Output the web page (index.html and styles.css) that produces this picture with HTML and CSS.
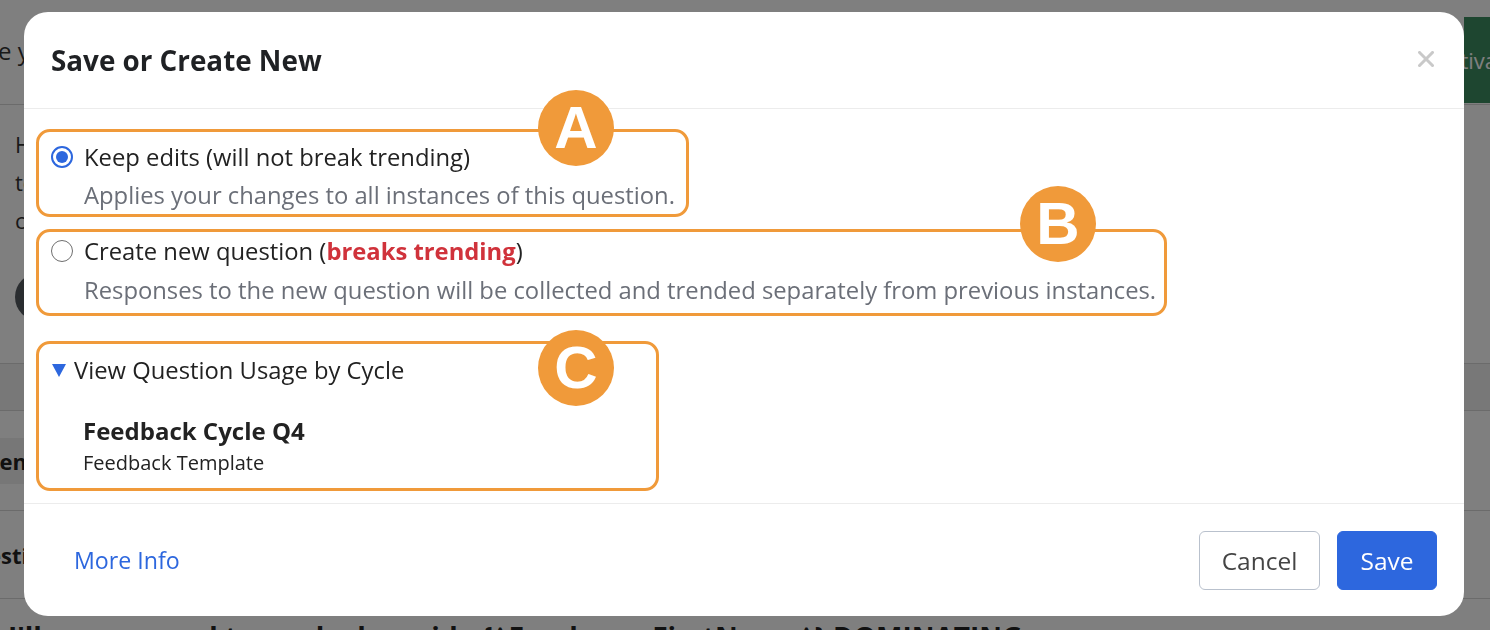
FILE: index.html
```html
<!DOCTYPE html>
<html lang="en">

<head>
    <meta charset="UTF-8">
    <meta name="viewport" content="width=device-width, initial-scale=1.0">
    <title>Save or Create New</title>
    <link rel="stylesheet" href="styles.css">
</head>

<body>
    <!-- page behind the dialog -->
    <div class="page">
        <div class="topbar">
            <span class="crumb">e your survey questions</span>
            <span class="activate">Activate</span>
        </div>
        <div class="intro">
            <p>Here you can review the questions</p>
            <p>to make sure they are right</p>
            <p>collecting feedback.</p>
            <div class="avatar"></div>
        </div>
        <div class="band"></div>
        <div class="row row-light"><span class="strong">Engagement</span></div>
        <div class="row row-short"><span class="strong">Questions</span></div>
        <div class="row-last">I'll recommend to work alongside {^Employee.FirstName^} DOMINATING</div>
    </div>

    <div class="overlay"></div>

    <div class="modal">
        <div class="modal-header">
            <h2>Save or Create New</h2>
            <button class="close" aria-label="Close">
                <svg width="16" height="16" viewBox="0 0 16 16">
                    <path d="M1.5 1.5 L14.5 14.5 M14.5 1.5 L1.5 14.5" stroke="#c9c9c9" stroke-width="3" stroke-linecap="square"/>
                </svg>
            </button>
        </div>

        <div class="modal-body">
            <div class="note note-a">
                <label class="option"><span class="radio checked"></span>Keep edits (will not break trending)</label>
                <p class="hint">Applies your changes to all instances of this question.</p>
                <span class="badge">A</span>
            </div>

            <div class="note note-b">
                <label class="option"><span class="radio"></span>Create new question (<b class="warn">breaks trending</b>)</label>
                <p class="hint">Responses to the new question will be collected and trended separately from previous instances.</p>
                <span class="badge">B</span>
            </div>

            <div class="note note-c">
                <div class="usage-toggle">
                    <svg class="caret" width="14" height="13" viewBox="0 0 14 13">
                        <polygon points="0,0 14,0 7,13" fill="#2d67de"/>
                    </svg>
                    View Question Usage by Cycle
                </div>
                <div class="usage-title">Feedback Cycle Q4</div>
                <div class="usage-sub">Feedback Template</div>
                <span class="badge">C</span>
            </div>
        </div>

        <div class="modal-footer">
            <a href="#" class="more">More Info</a>
            <div class="actions">
                <button class="btn">Cancel</button>
                <button class="btn primary">Save</button>
            </div>
        </div>
    </div>
</body>

</html>
```

FILE: styles.css
```css
body {
    margin: 0;
    font-family: "Open Sans", "Noto Sans", sans-serif;
    background: #fff;
    color: #222;
    overflow: hidden;
    height: 630px;
}

/* page behind */
.page {
    width: 1490px;
}

.topbar {
    height: 104px;
    border-bottom: 1px solid #d6d6d6;
    display: flex;
    justify-content: space-between;
}

.crumb {
    margin-top: 34px;
    margin-left: -2px;
    font-size: 24px;
    color: #333;
}

.activate {
    margin-top: 17px;
    height: 86px;
    width: 120px;
    margin-right: -94px;
    background: #3d8c60;
    color: #fff;
    font-size: 22px;
    line-height: 86px;
    text-indent: -28px;
}

.intro {
    padding: 20px 0 0 15px;
    height: 238px;
    border-bottom: 1px solid #d6d6d6;
}

.intro p {
    margin: 0;
    font-size: 22px;
    line-height: 38px;
    color: #333;
}

.avatar {
    margin-top: 34px;
    width: 48px;
    height: 48px;
    border-radius: 50%;
    background: #555a60;
}

.band {
    height: 46px;
    background: #f0f0f0;
    border-bottom: 1px solid #d6d6d6;
}

.row {
    height: 99px;
    border-bottom: 1px solid #d6d6d6;
    display: flex;
    align-items: center;
}

.row-short {
    height: 87px;
}

.row-light span {
    background: #eee;
    padding: 8px 0;
}

.strong {
    font-weight: bold;
    font-size: 22px;
    margin-left: -100px;
}

.row-short .strong {
    margin-left: -44px;
}

.row-last {
    font-weight: bold;
    font-size: 28px;
    padding-top: 19px;
    padding-left: 8px;
    white-space: nowrap;
}

.overlay {
    position: fixed;
    inset: 0;
    background: rgba(0, 0, 0, 0.5);
}

/* dialog */
.modal {
    position: fixed;
    left: 24px;
    top: 12px;
    width: 1440px;
    height: 604px;
    background: #fff;
    border-radius: 24px;
    display: flex;
    flex-direction: column;
    overflow: hidden;
}

.modal-header {
    height: 96px;
    border-bottom: 1px solid #ececec;
    display: flex;
    align-items: center;
    justify-content: space-between;
    padding: 0 30px 0 27px;
}

.modal-header h2 {
    margin: 0;
    font-size: 27.8px;
    font-weight: bold;
    color: #1f2124;
}

.close {
    border: none;
    background: none;
    padding: 0;
    width: 16px;
    height: 16px;
    cursor: pointer;
    margin-top: -2px;
}

.modal-body {
    flex: 1;
    padding: 20px 12px 12px;
}

.note {
    position: relative;
    border: 3px solid #f09a3a;
    border-radius: 14px;
}

.note-a {
    width: fit-content;
    padding: 6px 11px 0 12px;
}

.note-b {
    width: fit-content;
    margin-top: 12px;
    padding: 0 8px 4px 12px;
}

.note-b .hint {
    margin-top: 1px;
}

.note-c {
    box-sizing: border-box;
    width: 623px;
    margin-top: 25px;
    padding: 7px 12px 12px 13px;
}

.option {
    display: flex;
    align-items: center;
    font-size: 23.8px;
    line-height: 38px;
    color: #222;
}

.radio {
    width: 22px;
    height: 22px;
    box-sizing: border-box;
    border: 1.5px solid #6e6e6e;
    border-radius: 50%;
    margin-right: 11px;
    position: relative;
}

.radio.checked {
    border: 2px solid #2d67de;
}

.radio.checked::after {
    content: "";
    position: absolute;
    left: 3px;
    top: 3px;
    width: 12px;
    height: 12px;
    border-radius: 50%;
    background: #2d67de;
}

.warn {
    color: #d0323b;
}

.hint {
    margin: 0;
    padding-left: 33px;
    font-size: 23.8px;
    line-height: 38px;
    color: #6b6f78;
}

.usage-toggle {
    display: flex;
    align-items: center;
    font-size: 23.8px;
    line-height: 38px;
    color: #222;
}

.caret {
    margin-right: 8px;
}

.usage-title {
    margin: 27px 0 0 31px;
    font-size: 24px;
    line-height: 30px;
    font-weight: bold;
}

.usage-sub {
    margin: 4px 0 0 31px;
    font-size: 20px;
    line-height: 26px;
}

.badge {
    position: absolute;
    left: 499px;
    top: -42px;
    width: 76px;
    height: 76px;
    border-radius: 50%;
    background: #f09a3a;
    color: #fff;
    font-family: "Liberation Sans", Arial, sans-serif;
    font-weight: bold;
    font-size: 60px;
    line-height: 76px;
    text-align: center;
}

.note-b .badge {
    left: 981px;
    top: -46px;
}

.note-c .badge {
    top: -14px;
}

.modal-footer {
    height: 112px;
    border-top: 1px solid #ececec;
    display: flex;
    align-items: center;
    justify-content: space-between;
    padding: 0 27px 0 50px;
}

.more {
    color: #2d67de;
    text-decoration: none;
    font-size: 23.2px;
}

.actions {
    display: flex;
    gap: 17px;
}

.btn {
    width: 121px;
    height: 59px;
    border-radius: 6px;
    font-family: inherit;
    font-size: 24.5px;
    padding: 0;
    background: #fff;
    border: 1px solid #b9c1cd;
    color: #444;
    cursor: pointer;
}

.btn.primary {
    width: 100px;
    background: #2d67de;
    border-color: #2d67de;
    color: #fff;
}
```
